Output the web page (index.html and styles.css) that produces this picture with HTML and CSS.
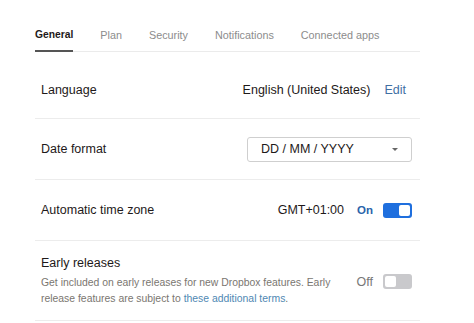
FILE: index.html
```html
<!DOCTYPE html>
<html lang="en">
<head>
  <meta charset="UTF-8" />
  <meta name="viewport" content="width=device-width, initial-scale=1.0"/>
  <title>Settings</title>
  <link rel="stylesheet" href="styles.css">
</head>
<body>
  <div class="settings">
    <nav class="tabs">
      <a class="tab active">General</a>
      <a class="tab">Plan</a>
      <a class="tab">Security</a>
      <a class="tab">Notifications</a>
      <a class="tab">Connected apps</a>
    </nav>

    <div class="row first">
      <span class="label">Language</span>
      <div class="controls">
        <span class="value">English (United States)</span>
        <a class="edit">Edit</a>
      </div>
    </div>

    <div class="row">
      <span class="label">Date format</span>
      <div class="select">
        <span>DD / MM / YYYY</span>
        <span class="caret"></span>
      </div>
    </div>

    <div class="row">
      <span class="label">Automatic time zone</span>
      <div class="controls">
        <span class="value">GMT+01:00</span>
        <span class="state on">On</span>
        <span class="toggle on"><span class="knob"></span></span>
      </div>
    </div>

    <div class="row tall">
      <div class="text">
        <div class="label">Early releases</div>
        <p class="desc">Get included on early releases for new Dropbox features. Early release features are subject to <a class="link">these additional terms</a>.</p>
      </div>
      <div class="controls">
        <span class="state off">Off</span>
        <span class="toggle"><span class="knob"></span></span>
      </div>
    </div>
  </div>
</body>
</html>
```

FILE: styles.css
```css
body {
  font-family: 'Liberation Sans', Arial, sans-serif;
  background: #fff;
  color: #1e1919;
  margin: 0;
}
.settings {
  width: 385px;
  margin-left: 35px;
}
.tabs {
  display: flex;
  gap: 27px;
  padding-top: 28px;
  border-bottom: 1px solid #ebebeb;
}
.tab {
  font-size: 10.8px;
  line-height: 14px;
  color: #8c8c8c;
  padding-bottom: 8px;
  margin-bottom: -1px;
  border-bottom: 2px solid transparent;
}
.tab.active {
  color: #1e1919;
  font-weight: bold;
  font-size: 10.3px;
  border-bottom-color: #555;
}
.row {
  display: flex;
  align-items: center;
  justify-content: space-between;
  min-height: 60px;
  padding: 0 8px 0 6px;
  border-bottom: 1px solid #ececec;
  font-size: 12.5px;
}
.row.first {
  margin-top: 6px;
  padding-top: 3px;
  min-height: 57px;
}
.row.tall {
  padding-top: 15px;
  padding-bottom: 13px;
  min-height: 0;
}
.label {
  line-height: 14px;
}
.controls {
  display: flex;
  align-items: center;
}
.edit {
  color: #3f6fa3;
  margin: 0 6px 0 14px;
}
.state {
  margin-left: 13px;
  margin-right: 10px;
}
.state.on {
  color: #2a63aa;
  font-weight: bold;
  font-size: 11.5px;
}
.state.off {
  color: #777;
}
.toggle {
  display: flex;
  width: 29px;
  height: 15px;
  box-sizing: border-box;
  padding: 2px;
  border-radius: 3px;
  background: #c9c9cc;
}
.toggle.on {
  background: #1f6fde;
  justify-content: flex-end;
}
.knob {
  width: 11px;
  height: 11px;
  border-radius: 2px;
  background: #fff;
}
.select {
  display: flex;
  align-items: center;
  justify-content: space-between;
  width: 165px;
  height: 25px;
  box-sizing: border-box;
  padding: 0 13px;
  border: 1px solid #cfcfcf;
  border-radius: 3px;
}
.caret {
  width: 0;
  height: 0;
  border-left: 3px solid transparent;
  border-right: 3px solid transparent;
  border-top: 3px solid #666;
}
.desc {
  margin: 5px 0 0;
  max-width: 300px;
  font-size: 10.4px;
  line-height: 16px;
  color: #7a7670;
}
.link {
  color: #4f88b3;
}
```
